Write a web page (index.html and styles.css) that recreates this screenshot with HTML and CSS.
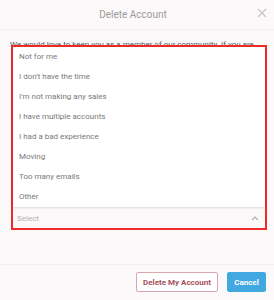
FILE: index.html
```html
<!DOCTYPE html>
<html lang="en">
<head>
    <meta charset="UTF-8">
    <meta name="viewport" content="width=device-width, initial-scale=1.0">
    <title>Delete Account</title>
    <link rel="stylesheet" href="styles.css">
</head>
<body>
    <div class="modal">
        <!-- header -->
        <div class="modal-head">
            <h2 class="modal-title">Delete Account</h2>
            <span class="close">
                <svg width="10" height="10" viewBox="0 0 10 10"><path d="M1 1L9 9M9 1L1 9" stroke="#c8c4c6" stroke-width="1.1" fill="none"/></svg>
            </span>
        </div>

        <!-- body -->
        <div class="modal-body">
            <p class="intro">We would love to keep you as a member of our community. If you are</p>

            <div class="dropdown">
                <ul class="options">
                    <li>Not for me</li>
                    <li>I don't have the time</li>
                    <li>I'm not making any sales</li>
                    <li>I have multiple accounts</li>
                    <li>I had a bad experience</li>
                    <li>Moving</li>
                    <li>Too many emails</li>
                    <li>Other</li>
                </ul>
                <div class="select-field">
                    <span>Select</span>
                    <svg width="8" height="5" viewBox="0 0 8 5"><path d="M1 4L4 1L7 4" stroke="#b5b1b3" stroke-width="1.2" fill="none"/></svg>
                </div>
            </div>
        </div>

        <!-- footer -->
        <div class="modal-foot">
            <button class="btn btn-delete">Delete My Account</button>
            <button class="btn btn-cancel">Cancel</button>
        </div>
    </div>
</body>
</html>
```

FILE: styles.css
```css
/* global */
html, body {
    margin: 0;
    padding: 0;
    width: 100%;
    height: 100%;
    overflow: hidden;
    background: #fcf9fa;
    font-family: Roboto, "Liberation Sans", sans-serif;
}

.modal {
    width: 274px;
    height: 300px;
    display: flex;
    flex-direction: column;
}

/* header */
.modal-head {
    height: 29px;
    display: flex;
    align-items: center;
    justify-content: center;
    position: relative;
    border-bottom: 1px solid #f3eef0;
}

.modal-title {
    margin: 0 8px 0 0;
    font-size: 10px;
    font-weight: 400;
    color: #9c9a9b;
}

.close {
    position: absolute;
    right: 7px;
    top: 8px;
    display: flex;
}

/* body */
.modal-body {
    flex: 1;
    position: relative;
    padding: 9px 10px 0;
    overflow: hidden;
}

.intro {
    margin: 0;
    font-size: 8px;
    line-height: 12px;
    color: #555;
    white-space: nowrap;
    overflow: hidden;
}

.dropdown {
    position: absolute;
    top: 15px;
    left: 11px;
    width: 252px;
    border: 2px solid #ee2a2a;
    background: #fbf8f9;
}

.options {
    list-style: none;
    margin: 0;
    padding: 0;
    background: #fff;
    box-shadow: 0 1px 2px rgba(0, 0, 0, 0.12);
    position: relative;
}

.options li {
    height: 20px;
    line-height: 20px;
    padding-left: 6px;
    font-size: 8px;
    color: #7a7879;
}

.select-field {
    height: 20px;
    margin-top: 1px;
    display: flex;
    align-items: center;
    justify-content: space-between;
    padding: 0 6px 0 4px;
    font-size: 8px;
    color: #b3b0b1;
}

/* footer */
.modal-foot {
    height: 34px;
    border-top: 1px solid #f3eef0;
    display: flex;
    justify-content: flex-end;
    align-items: center;
    gap: 9px;
    padding: 0 8px 1px 0;
}

.btn {
    height: 20px;
    font-family: Roboto, "Liberation Sans", sans-serif;
    font-size: 8px;
    font-weight: 700;
    border-radius: 2px;
    cursor: pointer;
}

.btn-delete {
    width: 82px;
    background: #fff;
    color: #a5505a;
    border: 1px solid #d9a6ac;
}

.btn-cancel {
    width: 39px;
    background: #41a8e0;
    color: #fff;
    border: 1px solid #41a8e0;
}
```
